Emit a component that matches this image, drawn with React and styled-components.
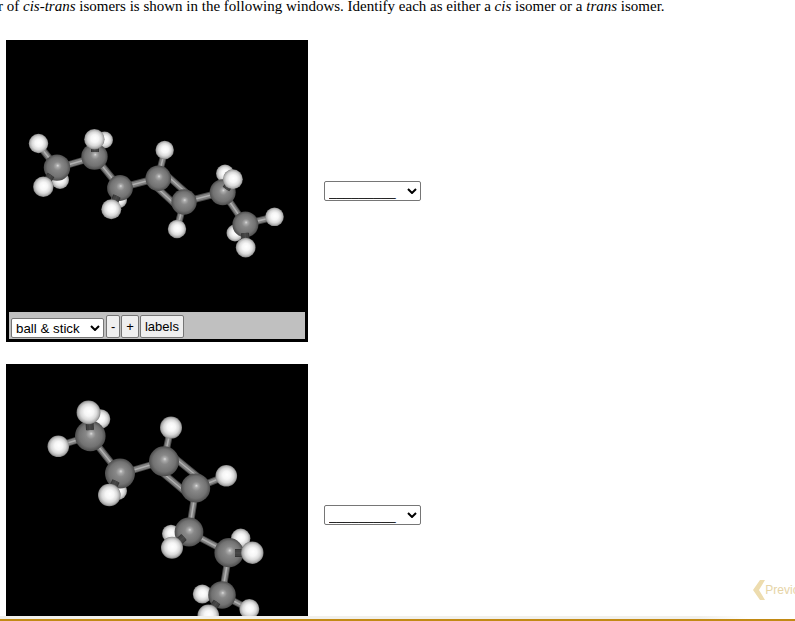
import React from "react";
import styled, { createGlobalStyle } from "styled-components";

const GlobalStyle = createGlobalStyle`
  body {
    margin: 0;
    background: #fff;
    color: #000;
    font-family: "Liberation Serif", "Times New Roman", serif;
  }
`;

const Page = styled.div`
  position: relative;
  display: flex;
  flex-direction: column;
  height: 100vh;
  overflow: hidden;
`;

const Content = styled.main`
  flex: 1;
  min-height: 0;
  overflow: hidden;
`;

const Prompt = styled.p`
  margin: 0 0 28px;
  text-indent: -2px;
  font-size: 15px;
  line-height: 12px;
  white-space: nowrap;
`;

const Questions = styled.div`
  display: flex;
  flex-direction: column;
  gap: 22px;
  padding-left: 6px;
`;

const Question = styled.div`
  display: flex;
  align-items: center;
  gap: 16px;
`;

const Viewer = styled.section`
  display: flex;
  flex-direction: column;
  flex-shrink: 0;
  width: 296px;
  padding: 3px;
  background: #000;
`;

const Canvas = styled.svg`
  display: block;
  width: 100%;
`;

const Toolbar = styled.div`
  display: flex;
  align-items: flex-end;
  gap: 1px;
  height: 27px;
  padding: 0 2px 1px;
  box-sizing: border-box;
  background: #c0c0c0;
`;

const Select = styled.select`
  appearance: none;
  width: ${(props) => props.$width};
  height: 20px;
  padding: 0 20px 0 4px;
  margin: 0;
  border: 1px solid #767676;
  border-radius: 2px;
  background: #fff
    url("data:image/svg+xml,%3Csvg xmlns='http://www.w3.org/2000/svg' width='10' height='6'%3E%3Cpath d='M1 1l4 4 4-4' fill='none' stroke='%23000' stroke-width='2'/%3E%3C/svg%3E")
    no-repeat right 3px center;
  color: #000;
  font-family: "Liberation Sans", Arial, sans-serif;
`;

const DisplaySelect = styled(Select)`
  margin-right: 1px;
`;

const Button = styled.button`
  height: 23px;
  padding: 0 4px 1px;
  border: 1px solid #767676;
  border-radius: 2px;
  background: #efefef;
  color: #000;
  font: 13px "Liberation Sans", Arial, sans-serif;
`;

const Previous = styled.a`
  position: absolute;
  right: -17px;
  bottom: 21px;
  display: flex;
  align-items: center;
  color: #e6d4a6;
  font: 12px "Liberation Sans", Arial, sans-serif;
  text-decoration: none;
`;

const Footer = styled.footer`
  height: 3px;
  border-bottom: 2px solid #c28a14;
  background: linear-gradient(to right, #f1f0ec 88%, #fff 94%);
`;

// Shapes are listed from back to front:
// H / C = atom [x, y, radius], B = bond, F = bond pointing at the viewer
const TRANS = [
  ["H", 54, 140, 9],
  ["H", 98.5, 100, 8.5],
  ["H", 113, 160, 8],
  ["H", 219, 133.5, 9],
  ["H", 229, 193, 8.5],
  ["B", 32, 104, 51, 128],
  ["B", 51, 128, 89, 117],
  ["B", 89, 117, 114, 148],
  ["B", 114, 148, 152, 138],
  ["B", 152, 138, 159, 110],
  ["B", 156, 131, 184, 156],
  ["B", 147, 144, 173, 168],
  ["B", 178, 162, 171, 189],
  ["B", 178, 162, 217, 152],
  ["B", 217, 152, 239, 184],
  ["B", 239, 184, 268, 177],
  ["H", 32.5, 103.5, 9.7],
  ["H", 158.7, 110, 9.2],
  ["H", 171, 189, 9.2],
  ["H", 268.5, 176.8, 9.3],
  ["C", 51, 127.6, 13.2],
  ["C", 88.5, 116.6, 13.2],
  ["C", 114, 148, 12.9],
  ["C", 152.3, 138.3, 12.8],
  ["C", 178, 162, 12.7],
  ["C", 216.7, 152.3, 13],
  ["C", 239.4, 184.4, 13],
  ["F", 45, 135, 37, 147],
  ["F", 89, 112, 89, 99],
  ["F", 111, 156, 105, 169],
  ["F", 220, 149, 227, 139],
  ["F", 239, 193, 240, 207],
  ["H", 37.3, 146.7, 10.2],
  ["H", 88.4, 99.2, 10.2],
  ["H", 105.3, 169.2, 10],
  ["H", 226.8, 139.3, 10],
  ["H", 239.7, 207.6, 9.9],
];

const CIS = [
  ["H", 94.5, 55, 9.8],
  ["H", 112, 127, 9],
  ["H", 165, 169.7, 9],
  ["H", 234.7, 174.3, 9.7],
  ["B", 52, 82, 84, 72],
  ["B", 84, 72, 114, 110],
  ["B", 114, 110, 158, 97],
  ["B", 158, 97, 165, 63],
  ["B", 164, 90, 197, 117],
  ["B", 152, 105, 183, 131],
  ["B", 190, 124, 220, 112],
  ["B", 190, 124, 183, 168],
  ["B", 183, 168, 223, 189],
  ["B", 223, 189, 216, 231],
  ["B", 216, 231, 243, 245],
  ["H", 52.3, 82.3, 10.8],
  ["H", 165, 63.6, 11],
  ["H", 220.3, 111.8, 10.8],
  ["H", 196.3, 230, 9.5],
  ["C", 84.3, 72, 15.3],
  ["C", 114, 109.6, 15],
  ["C", 158, 97.3, 15],
  ["C", 189.6, 124, 14.6],
  ["C", 183, 168, 14.4],
  ["C", 223, 188.7, 14.6],
  ["C", 216, 231, 13.8],
  ["H", 243.3, 245, 10],
  ["F", 84, 66, 83, 49],
  ["F", 110, 117, 103, 131],
  ["F", 178, 173, 166, 184],
  ["F", 229, 189, 246, 189],
  ["F", 211, 238, 202, 251],
  ["H", 82.5, 48.4, 11.9],
  ["H", 103.3, 131, 11.3],
  ["H", 166, 183.7, 11],
  ["H", 246.3, 188.7, 11.2],
  ["H", 202.3, 251.3, 10.8],
];

const BOND_COLORS = {
  B: ["#4c4c4c", "#808080", "#b0b0b0"],
  F: ["#343434", "#424242", "#4a4a4a"],
};

const Bond = ({ kind, points }) => {
  const [x1, y1, x2, y2] = points;
  const [edge, body, shine] = BOND_COLORS[kind];
  const width = kind === "F" ? 8 : 7;

  return (
    <g>
      <line x1={x1} y1={y1} x2={x2} y2={y2} stroke={edge} strokeWidth={width} />
      <line x1={x1} y1={y1} x2={x2} y2={y2} stroke={body} strokeWidth={width - 2} />
      <line x1={x1} y1={y1} x2={x2} y2={y2} stroke={shine} strokeWidth="1.6" />
    </g>
  );
};

const Molecule = ({ id, label, shapes }) => (
  <Canvas viewBox="3 3 296 269" role="img" aria-label={label}>
    <defs>
      <radialGradient id={`${id}-H`} cx="50%" cy="50%" r="50%" fx="53%" fy="45%">
        <stop offset="0%" stopColor="#fff" />
        <stop offset="38%" stopColor="#f6f6f6" />
        <stop offset="68%" stopColor="#dadada" />
        <stop offset="88%" stopColor="#b0b0b0" />
        <stop offset="100%" stopColor="#808080" />
      </radialGradient>
      <radialGradient id={`${id}-C`} cx="50%" cy="50%" r="50%" fx="53%" fy="42%">
        <stop offset="0%" stopColor="#dcdcdc" />
        <stop offset="12%" stopColor="#ababab" />
        <stop offset="32%" stopColor="#888888" />
        <stop offset="75%" stopColor="#727272" />
        <stop offset="100%" stopColor="#4c4c4c" />
      </radialGradient>
    </defs>
    {shapes.map(([kind, ...values], index) =>
      kind === "B" || kind === "F" ? (
        <Bond key={index} kind={kind} points={values} />
      ) : (
        <circle
          key={index}
          cx={values[0]}
          cy={values[1]}
          r={values[2]}
          fill={`url(#${id}-${kind})`}
        />
      )
    )}
  </Canvas>
);

const MoleculeQuestion = ({ id, label, shapes }) => (
  <Question>
    <Viewer>
      <Molecule id={id} label={label} shapes={shapes} />
      <Toolbar>
        <DisplaySelect $width="93px" aria-label="Display style">
          <option>ball &amp; stick</option>
          <option>wireframe</option>
          <option>spacefill</option>
        </DisplaySelect>
        <Button type="button">-</Button>
        <Button type="button">+</Button>
        <Button type="button">labels</Button>
      </Toolbar>
    </Viewer>
    <Select $width="97px" aria-label={`${label} isomer`}>
      <option>_________</option>
      <option>cis</option>
      <option>trans</option>
    </Select>
  </Question>
);

const App = () => (
  <Page>
    <GlobalStyle />
    <Content>
      <Prompt>
        r of <i>cis-trans</i> isomers is shown in the following windows.
        Identify each as either a <i>cis</i> isomer or a <i>trans</i> isomer.
      </Prompt>
      <Questions>
        <MoleculeQuestion id="first" label="First molecule" shapes={TRANS} />
        <MoleculeQuestion id="second" label="Second molecule" shapes={CIS} />
      </Questions>
    </Content>
    <Previous href="#previous">
      <svg width="12" height="20" viewBox="0 0 12 20" aria-hidden="true">
        <path d="M7 0h5L6 10l6 10H7L0 10z" fill="#eddcae" />
      </svg>
      Previous
    </Previous>
    <Footer />
  </Page>
);

export default App;
